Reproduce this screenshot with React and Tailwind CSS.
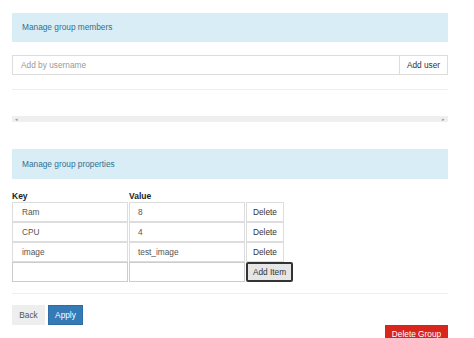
import React from 'react';

const rows = [
  { key: 'Ram', value: '8' },
  { key: 'CPU', value: '4' },
  { key: 'image', value: 'test_image' },
];

export default function App() {
  return (
    <div
      className="w-[474px] h-[338px] overflow-hidden bg-white pl-[12px] pt-[13px] text-[8.3px] text-[#333]"
      style={{ fontFamily: '"Liberation Sans", Arial, sans-serif' }}
    >
      <div className="w-[436px]">
        {/* Members */}
        <div className="h-[29px] bg-[#d9edf7] text-[#31708f] flex items-center pl-[10px]">
          Manage group members
        </div>
        <div className="mt-[13px] flex h-[20px] border border-[#ddd]">
          <div className="flex-1 flex items-center pl-[8px] text-[#999]">Add by username</div>
          <div className="w-[48px] border-l border-[#ddd] flex items-center justify-center text-[#333]">
            Add user
          </div>
        </div>
        <div className="mt-[14px] border-t border-[#eee]" />
        <div className="mt-[26px] h-[6px] bg-[#efefef] flex items-center justify-between px-[3px]">
          <span className="text-[5px] leading-none text-[#999]">◂</span>
          <span className="text-[5px] leading-none text-[#999]">▸</span>
        </div>

        {/* Properties */}
        <div className="mt-[27px] h-[30px] bg-[#d9edf7] text-[#31708f] flex items-center pl-[10px]">
          Manage group properties
        </div>
        <div className="mt-[12px] flex font-bold text-[#222] text-[8.5px] leading-[11px]">
          <div className="w-[117px]">Key</div>
          <div>Value</div>
        </div>
        <div className="flex flex-col">
          {rows.map((r) => (
            <div key={r.key} className="flex h-[20px]">
              <div className="w-[116px] border border-[#ddd] flex items-center pl-[9px] text-[#555]">{r.key}</div>
              <div className="ml-[1px] w-[116px] border border-[#ddd] flex items-center pl-[8px] text-[#555]">{r.value}</div>
              <div className="ml-[1px] w-[38px] border border-[#ddd] flex items-center justify-center text-[#333]">
                Delete
              </div>
            </div>
          ))}
          <div className="flex h-[20px]">
            <div className="w-[116px] border border-[#ccc]" />
            <div className="ml-[1px] w-[116px] border border-[#ccc]" />
            <div className="ml-[1px] w-[47px] border-2 border-[#333] rounded-[2px] bg-[#e6e6e6] flex items-center justify-center text-[#333]">
              Add Item
            </div>
          </div>
        </div>
        <div className="mt-[11px] border-t border-[#eee]" />
        <div className="mt-[11px] flex gap-[3px]">
          <div className="w-[33px] h-[20px] bg-[#eee] flex items-center justify-center text-[#555]">Back</div>
          <div className="w-[35px] h-[20px] bg-[#337ab7] border border-[#2e6da4] flex items-center justify-center text-white">
            Apply
          </div>
        </div>
        <div className="flex justify-end">
          <div className="w-[63px] h-[24px] bg-[#d9261c] flex justify-center pt-[4px] text-white leading-[10px]">
            Delete Group
          </div>
        </div>
      </div>
    </div>
  );
}
